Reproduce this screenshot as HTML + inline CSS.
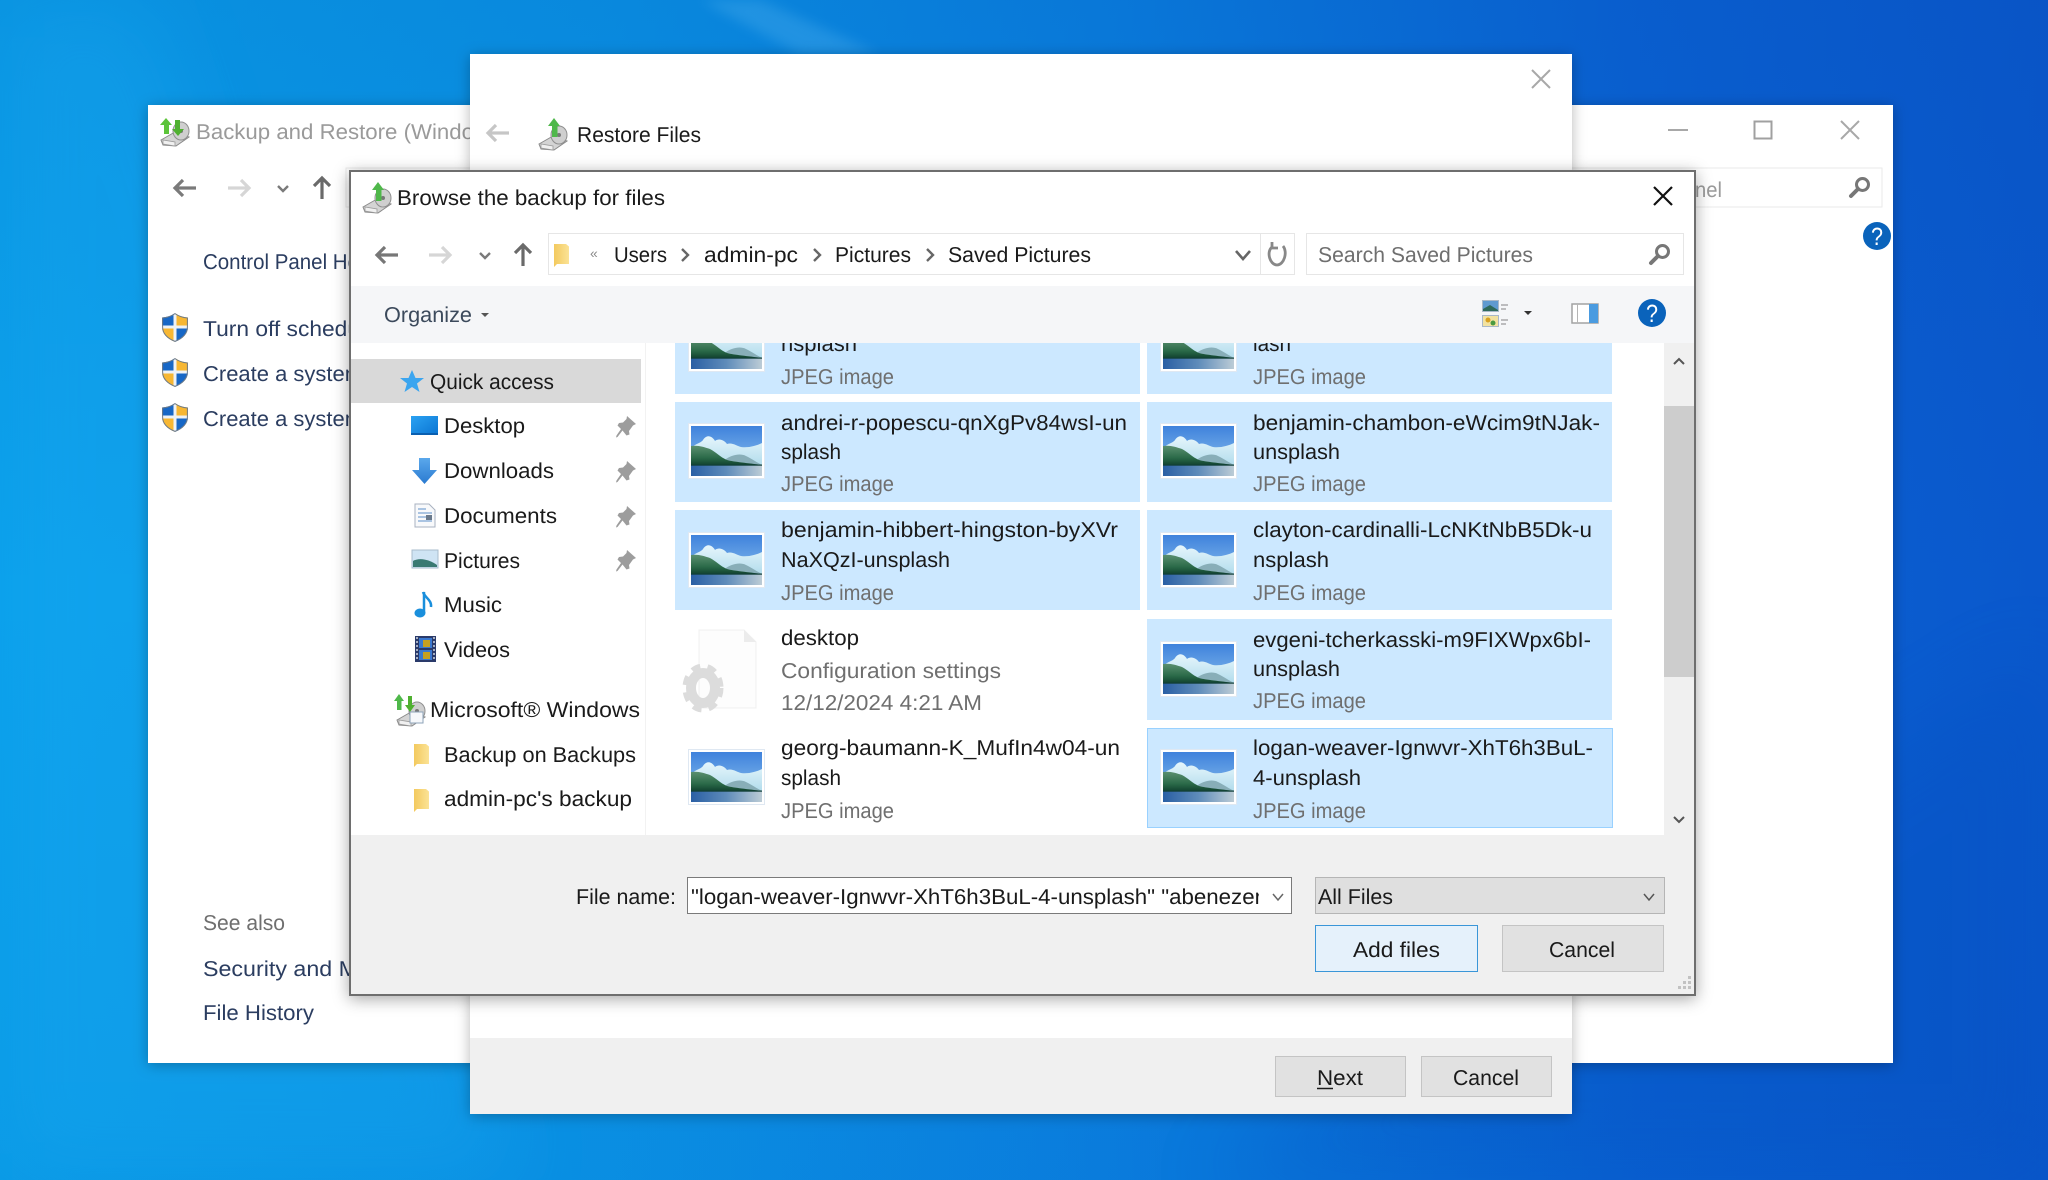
<!DOCTYPE html>
<html><head><meta charset="utf-8"><title>Browse the backup for files</title>
<style>
html,body{margin:0;padding:0;width:2048px;height:1180px;overflow:hidden;background:#0a80e0}
svg{display:block;position:absolute;left:0;top:0}
text{font-family:"Liberation Sans",sans-serif;font-size:21.5px;fill:#1a1a1a;text-rendering:geometricPrecision;white-space:pre}
.g{fill:#6f6f6f}
.l{fill:#2b3d60}
.d{fill:#9a9a9a}
</style></head><body>
<svg width="2048" height="1180" viewBox="0 0 2048 1180" xmlns="http://www.w3.org/2000/svg">
<defs>
<linearGradient id="bg" x1="0" y1="0" x2="1" y2="0">
<stop offset="0" stop-color="#0a9fea"/><stop offset=".3" stop-color="#0a93e6"/><stop offset=".55" stop-color="#0a7fe0"/><stop offset=".8" stop-color="#0a62d4"/><stop offset="1" stop-color="#0a58cc"/>
</linearGradient>
<linearGradient id="bg2" x1="0" y1="0" x2="0" y2="1">
<stop offset="0" stop-color="#003a9a" stop-opacity=".12"/><stop offset=".5" stop-color="#003a9a" stop-opacity="0"/><stop offset="1" stop-color="#003a9a" stop-opacity=".06"/>
</linearGradient>
<linearGradient id="sky" x1="0" y1="0" x2="0" y2="1"><stop offset="0" stop-color="#3f82dc"/><stop offset=".7" stop-color="#7cb4ea"/><stop offset="1" stop-color="#a8d4f4"/></linearGradient>
<linearGradient id="cloud" x1="0" y1="0" x2="0" y2="1"><stop offset="0" stop-color="#e6f6fc"/><stop offset="1" stop-color="#b2dcec"/></linearGradient>
<linearGradient id="hill" x1="0" y1="0" x2="0" y2="1"><stop offset="0" stop-color="#5b8f70"/><stop offset=".6" stop-color="#2a6a48"/><stop offset="1" stop-color="#0e3d2c"/></linearGradient>
<linearGradient id="water" x1="0" y1="0" x2="1" y2="0"><stop offset="0" stop-color="#2a5fa4"/><stop offset=".5" stop-color="#5f8cba"/><stop offset="1" stop-color="#bcccd6"/></linearGradient>
<linearGradient id="dl" x1="0" y1="0" x2="0" y2="1"><stop offset="0" stop-color="#5aa8ec"/><stop offset="1" stop-color="#2a7ad0"/></linearGradient>
<linearGradient id="fold" x1="0" y1="0" x2="1" y2="0"><stop offset="0" stop-color="#f3c95e"/><stop offset="1" stop-color="#fbe396"/></linearGradient>
<linearGradient id="desk" x1="0" y1="0" x2="1" y2="1"><stop offset="0" stop-color="#2ba2f2"/><stop offset="1" stop-color="#0a74d2"/></linearGradient>
<filter id="s1" x="-5%" y="-5%" width="110%" height="110%"><feDropShadow dx="0" dy="2" stdDeviation="7" flood-color="#000" flood-opacity=".28"/></filter>
<filter id="s2" x="-5%" y="-5%" width="110%" height="110%"><feDropShadow dx="0" dy="3" stdDeviation="8" flood-color="#000" flood-opacity=".35"/></filter>
<filter id="blur" x="-30%" y="-30%" width="160%" height="160%"><feGaussianBlur stdDeviation="40"/></filter>
<filter id="blur2" x="-30%" y="-30%" width="160%" height="160%"><feGaussianBlur stdDeviation="6"/></filter>
<clipPath id="fnclip"><rect x="690" y="878" width="569" height="35"/></clipPath>
<clipPath id="shieldclip"><path d="M13 0C9 3 5 4 0 4.5V14C0 21 6 26 13 29C20 26 26 21 26 14V4.5C21 4 17 3 13 0Z"/></clipPath>
<symbol id="thumb" viewBox="0 0 77 56" width="77" height="56">
<rect x=".5" y=".5" width="76" height="55" fill="#fff" stroke="#dfe8f2"/>
<rect x="3" y="3" width="71" height="50" fill="url(#sky)"/>
<path d="M3 26C7 20 12 21 15 17C19 11 24 13 27 18C31 15 36 17 39 21C44 19 49 23 53 24C60 25 68 23 74 20V42H3Z" fill="url(#cloud)"/>
<path d="M38 36C44 32 52 30 58 33C64 36 70 40 74 42H38Z" fill="#88aeb8"/>
<path d="M3 23C10 22 16 24 22 26C28 29 32 34 39 37C46 39 60 40 74 42V43H3Z" fill="url(#hill)"/>
<rect x="3" y="42" width="71" height="11" fill="url(#water)"/>
<rect x="3" y="41.500" width="71" height="1.200" fill="#123f38"/>
</symbol>
<symbol id="disk" viewBox="0 0 32 32" width="32" height="32">
<path d="M1 24L15 16L29 21L16 30L3 29Z" fill="#d4d4d4" stroke="#8a8a8a"/>
<ellipse cx="21" cy="15" rx="8" ry="9" fill="#cfcfcf" stroke="#8f8f8f"/>
<circle cx="21" cy="15" r="2" fill="#777"/>
<path d="M3 24L3 28L15 30L15 26Z" fill="#f0f0f0" stroke="#9a9a9a" stroke-width=".8"/>
</symbol>
<symbol id="shield" viewBox="0 0 26 29" width="26" height="29">
<g clip-path="url(#shieldclip)">
<rect width="13" height="14" fill="#1767c6"/><rect x="13" width="13" height="14" fill="#f7b733"/>
<rect y="14" width="13" height="15" fill="#f7b733"/><rect x="13" y="14" width="13" height="15" fill="#1767c6"/>
<rect x="11.500" width="3" height="29" fill="#eef2f6"/><rect y="12.500" width="26" height="3" fill="#eef2f6"/>
</g>
<path d="M13 .6C9 3.400 5 4.600 .6 5V14C.6 21 6 25.600 13 28.400C20 25.600 25.400 21 25.400 14V5C21 4.600 17 3.400 13 .6Z" fill="none" stroke="#6d7a88" stroke-width="1"/>
</symbol>
<symbol id="pin" viewBox="0 0 20 22" width="20" height="22">
<path d="M11 0L20 8L17 9.500L13 15L13.500 18.500L10.500 19.500L6.500 14.500L1.500 21L0 21.500L.5 19.500L5 13L1.500 9.500L3 7L7 6.500L10.500 3Z" fill="#9d9d9d"/>
</symbol>
<symbol id="folder" viewBox="0 0 20 24" width="20" height="24">
<path d="M1 1H13L16 3.500V21H4L1 24Z" fill="url(#fold)"/>
</symbol>
<symbol id="search" viewBox="0 0 24 24" width="24" height="24">
<circle cx="14.500" cy="8.500" r="6" fill="none" stroke="#777" stroke-width="3"/>
<path d="M10 13L3 20" stroke="#777" stroke-width="4" stroke-linecap="round"/>
</symbol>
<symbol id="arr" viewBox="0 0 26 20" width="26" height="20">
<path d="M24 10H3M11 2L3 10L11 18" fill="none" stroke="currentColor" stroke-width="3.200"/>
</symbol>
<symbol id="up" viewBox="0 0 20 26" width="20" height="26">
<path d="M10 24V3M2 11L10 3L18 11" fill="none" stroke="currentColor" stroke-width="3.200"/>
</symbol>
</defs>

<rect width="2048" height="1180" fill="url(#bg)"/>
<rect width="2048" height="1180" fill="url(#bg2)"/>
<path d="M0 0H150L520 1180H0Z" fill="#22b4f8" opacity=".22" filter="url(#blur)"/>
<path d="M700 0H760L880 54H800Z" fill="#7fd0fa" opacity=".2" filter="url(#blur2)"/>
<path d="M1200 1180L2048 650V1180Z" fill="#0648b8" opacity=".2" filter="url(#blur)"/>

<!-- back window -->
<g filter="url(#s1)"><rect x="148" y="105" width="1745" height="958" fill="#fff"/></g>
<use href="#disk" x="160" y="116"/>
<path d="M166 118L172 125H169V134H164V125H160Z" fill="#5cc43a"/><path d="M178 136L172 129H175V120H180V129H184Z" fill="#4fb030"/>
<text x="196" y="139" class="d" textLength="278" lengthAdjust="spacingAndGlyphs">Backup and Restore (Windo</text>
<use href="#arr" x="172" y="178" color="#7a7a7a"/>
<use href="#arr" x="226" y="178" transform="rotate(180 239 188)" color="#d6d6d6"/>
<path d="M278 186L283 191L288 186" fill="none" stroke="#7a7a7a" stroke-width="2.400"/>
<use href="#up" x="312" y="175" color="#6a6a6a"/>
<rect x="346" y="168" width="1536" height="39" fill="#fff" stroke="#eaeaea"/>
<text x="203" y="269" class="l" textLength="156" lengthAdjust="spacingAndGlyphs">Control Panel Ho</text>
<use href="#shield" x="162" y="313"/><text x="203" y="336" class="l" textLength="157" lengthAdjust="spacingAndGlyphs">Turn off schedu</text>
<use href="#shield" x="162" y="358"/><text x="203" y="381" class="l" textLength="160" lengthAdjust="spacingAndGlyphs">Create a system</text>
<use href="#shield" x="162" y="403"/><text x="203" y="426" class="l" textLength="160" lengthAdjust="spacingAndGlyphs">Create a system</text>
<text x="203" y="930" class="g" textLength="82" lengthAdjust="spacingAndGlyphs">See also</text>
<text x="203" y="976" class="l" textLength="155" lengthAdjust="spacingAndGlyphs">Security and M</text>
<text x="203" y="1020" class="l" textLength="111" lengthAdjust="spacingAndGlyphs">File History</text>
<path d="M1668 130H1688" stroke="#a8a8a8" stroke-width="2"/>
<rect x="1754.500" y="121.500" width="17" height="17" fill="none" stroke="#a0a0a0" stroke-width="2"/>
<path d="M1841 121L1859 139M1859 121L1841 139" stroke="#a8a8a8" stroke-width="2"/>
<text x="1695" y="197" class="d" textLength="27" lengthAdjust="spacingAndGlyphs">nel</text>
<use href="#search" x="1848" y="176"/>
<circle cx="1877" cy="236" r="14" fill="#0a63bb"/><text x="1871" y="245" style="fill:#fff;font-size:25px" textLength="12" lengthAdjust="spacingAndGlyphs">?</text>

<!-- middle window -->
<g filter="url(#s1)"><rect x="470" y="54" width="1102" height="1060" fill="#fff"/></g>
<path d="M1532 70L1550 88M1550 70L1532 88" stroke="#a8a8a8" stroke-width="2"/>
<use href="#arr" x="485" y="123" color="#c6c6c6"/>
<use href="#disk" x="538" y="120"/>
<path d="M554 118L560 126H557.500V137H552V126H548Z" fill="#4fb84a"/>
<text x="577" y="142" textLength="124" lengthAdjust="spacingAndGlyphs">Restore Files</text>
<rect x="470" y="1038" width="1102" height="76" fill="#f0f0f0"/>
<rect x="1275.500" y="1056.500" width="130" height="40" fill="#e1e1e1" stroke="#c4c4c4"/>
<rect x="1421.500" y="1056.500" width="130" height="40" fill="#e1e1e1" stroke="#c4c4c4"/>
<text x="1317" y="1085" textLength="46" lengthAdjust="spacingAndGlyphs">Next</text>
<path d="M1317 1088.500H1333" stroke="#1a1a1a" stroke-width="1.500"/>
<text x="1453" y="1085" textLength="66" lengthAdjust="spacingAndGlyphs">Cancel</text>

<!-- dialog -->
<g filter="url(#s2)"><rect x="350" y="171" width="1345" height="824" fill="#fff" stroke="#6e6e6e" stroke-width="2"/></g>
<use href="#disk" x="362" y="183"/>
<path d="M378 182L384 190H381.500V201H376V190H372Z" fill="#4fb84a"/>
<text x="397" y="205" textLength="268" lengthAdjust="spacingAndGlyphs">Browse the backup for files</text>
<path d="M1654 187L1672 205M1672 187L1654 205" stroke="#111" stroke-width="2.200"/>

<use href="#arr" x="374" y="245" color="#777"/>
<use href="#arr" x="427" y="245" transform="rotate(180 440 255)" color="#d6d6d6"/>
<path d="M480 253L485 258L490 253" fill="none" stroke="#7a7a7a" stroke-width="2.400"/>
<use href="#up" x="513" y="242" color="#6a6a6a"/>
<rect x="548.500" y="233.500" width="746" height="41" fill="#fff" stroke="#e6e6e6"/>
<path d="M1260.500 234V274" stroke="#e6e6e6"/>
<use href="#folder" x="553" y="243"/>
<text x="590" y="258" style="font-size:14px;fill:#888">«</text>
<text x="614" y="262" textLength="53" lengthAdjust="spacingAndGlyphs">Users</text>
<path d="M682 249L688 255L682 261" fill="none" stroke="#666" stroke-width="2.400"/>
<text x="704" y="262" textLength="94" lengthAdjust="spacingAndGlyphs">admin-pc</text>
<path d="M814 249L820 255L814 261" fill="none" stroke="#666" stroke-width="2.400"/>
<text x="835" y="262" textLength="76" lengthAdjust="spacingAndGlyphs">Pictures</text>
<path d="M927 249L933 255L927 261" fill="none" stroke="#666" stroke-width="2.400"/>
<text x="948" y="262" textLength="143" lengthAdjust="spacingAndGlyphs">Saved Pictures</text>
<path d="M1236 251L1243 259L1250 251" fill="none" stroke="#666" stroke-width="2.600"/>
<path d="M1272 247C1266 252 1270 265 1277 265C1284 265 1288 252 1283 246M1272 242V248H1278" fill="none" stroke="#888" stroke-width="2.800"/>
<rect x="1306.500" y="233.500" width="377" height="41" fill="#fff" stroke="#e6e6e6"/>
<text x="1318" y="262" class="g" textLength="215" lengthAdjust="spacingAndGlyphs">Search Saved Pictures</text>
<use href="#search" x="1648" y="243"/>

<!-- tiles -->
<g fill="#cce8ff">
<rect x="675" y="294" width="465" height="100"/><rect x="1147" y="294" width="465" height="100"/>
<rect x="675" y="402" width="465" height="100"/><rect x="1147" y="402" width="465" height="100"/>
<rect x="675" y="510" width="465" height="100"/><rect x="1147" y="510" width="465" height="100"/>
<rect x="1147" y="619" width="465" height="101"/>
<rect x="1147.500" y="728.500" width="465" height="99" stroke="#99d1ff"/>
</g>
<use href="#thumb" x="688" y="316"/><use href="#thumb" x="1160" y="316"/>
<use href="#thumb" x="688" y="423"/><use href="#thumb" x="1160" y="423"/>
<use href="#thumb" x="688" y="532"/><use href="#thumb" x="1160" y="532"/>
<use href="#thumb" x="1160" y="641"/>
<use href="#thumb" x="688" y="749"/><use href="#thumb" x="1160" y="749"/>

<text x="781" y="351" textLength="76" lengthAdjust="spacingAndGlyphs">nsplash</text>
<text x="781" y="384" class="g" textLength="113" lengthAdjust="spacingAndGlyphs">JPEG image</text>
<text x="1253" y="351" textLength="38" lengthAdjust="spacingAndGlyphs">lash</text>
<text x="1253" y="384" class="g" textLength="113" lengthAdjust="spacingAndGlyphs">JPEG image</text>

<text x="781" y="430" textLength="346" lengthAdjust="spacingAndGlyphs">andrei-r-popescu-qnXgPv84wsI-un</text>
<text x="781" y="459" textLength="60" lengthAdjust="spacingAndGlyphs">splash</text>
<text x="781" y="491" class="g" textLength="113" lengthAdjust="spacingAndGlyphs">JPEG image</text>
<text x="1253" y="430" textLength="347" lengthAdjust="spacingAndGlyphs">benjamin-chambon-eWcim9tNJak-</text>
<text x="1253" y="459" textLength="87" lengthAdjust="spacingAndGlyphs">unsplash</text>
<text x="1253" y="491" class="g" textLength="113" lengthAdjust="spacingAndGlyphs">JPEG image</text>

<text x="781" y="537" textLength="337" lengthAdjust="spacingAndGlyphs">benjamin-hibbert-hingston-byXVr</text>
<text x="781" y="567" textLength="169" lengthAdjust="spacingAndGlyphs">NaXQzI-unsplash</text>
<text x="781" y="600" class="g" textLength="113" lengthAdjust="spacingAndGlyphs">JPEG image</text>
<text x="1253" y="537" textLength="339" lengthAdjust="spacingAndGlyphs">clayton-cardinalli-LcNKtNbB5Dk-u</text>
<text x="1253" y="567" textLength="76" lengthAdjust="spacingAndGlyphs">nsplash</text>
<text x="1253" y="600" class="g" textLength="113" lengthAdjust="spacingAndGlyphs">JPEG image</text>

<path d="M699 630H744L756 642V708H699Z" fill="#fdfdfd" stroke="#f0f0f0"/><path d="M744 630V642H756Z" fill="#ececec"/>
<ellipse cx="703" cy="688" rx="12" ry="15" fill="none" stroke="#dcdcdc" stroke-width="10"/>
<ellipse cx="703" cy="688" rx="18" ry="22" fill="none" stroke="#dcdcdc" stroke-width="5" stroke-dasharray="9 7.500"/>
<text x="781" y="645" textLength="78" lengthAdjust="spacingAndGlyphs">desktop</text>
<text x="781" y="678" class="g" textLength="220" lengthAdjust="spacingAndGlyphs">Configuration settings</text>
<text x="781" y="710" class="g" textLength="201" lengthAdjust="spacingAndGlyphs">12/12/2024 4:21 AM</text>

<text x="1253" y="647" textLength="338" lengthAdjust="spacingAndGlyphs">evgeni-tcherkasski-m9FIXWpx6bI-</text>
<text x="1253" y="676" textLength="87" lengthAdjust="spacingAndGlyphs">unsplash</text>
<text x="1253" y="708" class="g" textLength="113" lengthAdjust="spacingAndGlyphs">JPEG image</text>

<text x="781" y="755" textLength="339" lengthAdjust="spacingAndGlyphs">georg-baumann-K_MufIn4w04-un</text>
<text x="781" y="785" textLength="60" lengthAdjust="spacingAndGlyphs">splash</text>
<text x="781" y="818" class="g" textLength="113" lengthAdjust="spacingAndGlyphs">JPEG image</text>
<text x="1253" y="755" textLength="340" lengthAdjust="spacingAndGlyphs">logan-weaver-Ignwvr-XhT6h3BuL-</text>
<text x="1253" y="785" textLength="108" lengthAdjust="spacingAndGlyphs">4-unsplash</text>
<text x="1253" y="818" class="g" textLength="113" lengthAdjust="spacingAndGlyphs">JPEG image</text>

<!-- toolbar -->
<rect x="351" y="286" width="1343" height="57" fill="#f5f6f8"/>
<text x="384" y="322" style="fill:#3c4a5c" textLength="88" lengthAdjust="spacingAndGlyphs">Organize</text>
<path d="M481 313H489L485 317Z" fill="#555"/>
<rect x="1482.500" y="300.500" width="16" height="11" fill="#5f9ad0" stroke="#a9b8c8"/>
<path d="M1483 309L1490 305L1498 310V311H1483Z" fill="#2e6a5a"/>
<rect x="1482.500" y="315.500" width="16" height="11" fill="#f2e2a0" stroke="#a9b8c8"/>
<circle cx="1488" cy="320" r="2.500" fill="#d8a020"/><circle cx="1493" cy="323" r="2.500" fill="#4a9a40"/>
<path d="M1501 305H1508M1501 309H1506M1501 320H1508M1501 324H1506" stroke="#9a9a9a" stroke-width="1.200"/>
<path d="M1524 311H1532L1528 315Z" fill="#333"/>
<rect x="1572" y="304" width="26" height="19" fill="#fff" stroke="#a2a2a2" stroke-width="1.500"/>
<rect x="1589" y="304" width="9" height="19" fill="#4a9be0"/><path d="M1577.500 304V323" stroke="#b5b5b5"/>
<circle cx="1652" cy="313" r="14" fill="#0a63bb"/>
<text x="1646" y="322" style="fill:#fff;font-size:25px" textLength="12" lengthAdjust="spacingAndGlyphs">?</text>

<!-- nav pane -->
<path d="M645.500 343V835" stroke="#f2f2f2"/>
<rect x="351" y="359" width="290" height="44" fill="#d9d9d9"/>
<path d="M412 370L415.500 378H424L417 383.500L419.500 392L412 387L404.500 392L407 383.500L400 378H408.500Z" fill="#3ba5ef"/>
<text x="430" y="389" textLength="124" lengthAdjust="spacingAndGlyphs">Quick access</text>

<rect x="411" y="416" width="27" height="19" fill="url(#desk)"/><rect x="411" y="433" width="27" height="2" fill="#0a5fb0"/>
<text x="444" y="433" textLength="81" lengthAdjust="spacingAndGlyphs">Desktop</text>
<use href="#pin" x="616" y="416"/>

<path d="M419 458H430V470H437L424.500 484L412 470H419Z" fill="url(#dl)"/>
<text x="444" y="478" textLength="110" lengthAdjust="spacingAndGlyphs">Downloads</text>
<use href="#pin" x="616" y="461"/>

<path d="M415 504H429L435 510V527H415Z" fill="#f8f9fb" stroke="#a8b2c0"/><path d="M418 509H426M418 513H432M418 517H426M418 521H432" stroke="#5d8ec8"/><rect x="426" y="515" width="6" height="5" fill="#6a7a8c"/>
<text x="444" y="523" textLength="113" lengthAdjust="spacingAndGlyphs">Documents</text>
<use href="#pin" x="616" y="506"/>

<rect x="412" y="550" width="26" height="18" fill="#cfe4f4" stroke="#a9bccd"/><path d="M413 561C420 557 430 560 437 565V567H413Z" fill="#3a7a72"/>
<text x="444" y="568" textLength="76" lengthAdjust="spacingAndGlyphs">Pictures</text>
<use href="#pin" x="616" y="550"/>

<path d="M423 592C425 598 432 600 431 607" fill="none" stroke="#1a8fdc" stroke-width="2.500"/>
<path d="M424 592V613" stroke="#1a8fdc" stroke-width="2.500"/>
<ellipse cx="420" cy="613" rx="5.500" ry="4.500" fill="#1a8fdc"/>
<text x="444" y="612" textLength="58" lengthAdjust="spacingAndGlyphs">Music</text>

<rect x="415" y="636" width="21" height="26" fill="#2a3a6a"/><rect x="419" y="638" width="13" height="10" fill="#3a78d0"/><rect x="419" y="650" width="13" height="10" fill="#3a78d0"/>
<rect x="423" y="640" width="7" height="7" fill="#c8a020"/><rect x="423" y="652" width="7" height="7" fill="#c8a020"/>
<path d="M417 637V661M434 637V661" stroke="#cfd6e0" stroke-width="1.500" stroke-dasharray="2 2"/>
<text x="444" y="657" textLength="66" lengthAdjust="spacingAndGlyphs">Videos</text>

<use href="#disk" x="396" y="696"/>
<path d="M399 694L404 701H401.500V710H397V701H394Z" fill="#4fb84a"/><path d="M410 712L405 705H408V696H412V705H415Z" fill="#4fb030"/>
<rect x="410" y="712" width="13" height="11" fill="#f6f8fb" stroke="#8ea3b8"/>
<text x="430" y="717" textLength="210" lengthAdjust="spacingAndGlyphs">Microsoft® Windows</text>

<use href="#folder" x="413" y="743"/>
<text x="444" y="762" textLength="192" lengthAdjust="spacingAndGlyphs">Backup on Backups</text>
<use href="#folder" x="413" y="788"/>
<text x="444" y="806" textLength="188" lengthAdjust="spacingAndGlyphs">admin-pc's backup</text>

<!-- scrollbar -->
<rect x="1664" y="343" width="30" height="492" fill="#f0f0f0"/>
<rect x="1664" y="406" width="30" height="271" fill="#cdcdcd"/>
<path d="M1674 364L1679 359L1684 364M1674 817L1679 822L1684 817" fill="none" stroke="#555" stroke-width="2"/>

<!-- bottom -->
<rect x="351" y="835" width="1343" height="159" fill="#f0f0f0"/>
<text x="576" y="904" textLength="100" lengthAdjust="spacingAndGlyphs">File name:</text>
<rect x="687.500" y="877.500" width="604" height="36" fill="#fff" stroke="#7a7a7a"/>
<g clip-path="url(#fnclip)"><text x="691" y="904" textLength="571" lengthAdjust="spacingAndGlyphs">"logan-weaver-Ignwvr-XhT6h3BuL-4-unsplash" "abenezer</text></g>
<path d="M1273 894L1278 900L1283 894" fill="none" stroke="#666" stroke-width="1.500"/>
<rect x="1315.500" y="877.500" width="349" height="36" fill="#dfdfdf" stroke="#b5b5b5"/>
<text x="1318" y="904" textLength="75" lengthAdjust="spacingAndGlyphs">All Files</text>
<path d="M1644 894L1649 900L1654 894" fill="none" stroke="#555" stroke-width="1.500"/>
<rect x="1315.500" y="925.500" width="162" height="46" fill="#e5f1fb" stroke="#3a96d8" stroke-width="1"/>
<text x="1353" y="957" textLength="87" lengthAdjust="spacingAndGlyphs">Add files</text>
<rect x="1502.500" y="925.500" width="161" height="46" fill="#e1e1e1" stroke="#c4c4c4"/>
<text x="1549" y="957" textLength="66" lengthAdjust="spacingAndGlyphs">Cancel</text>
<g fill="#c2c2c2"><rect x="1688" y="976" width="3" height="3"/><rect x="1683" y="981" width="3" height="3"/><rect x="1688" y="981" width="3" height="3"/><rect x="1678" y="986" width="3" height="3"/><rect x="1683" y="986" width="3" height="3"/><rect x="1688" y="986" width="3" height="3"/></g>
</svg>
</body></html>
